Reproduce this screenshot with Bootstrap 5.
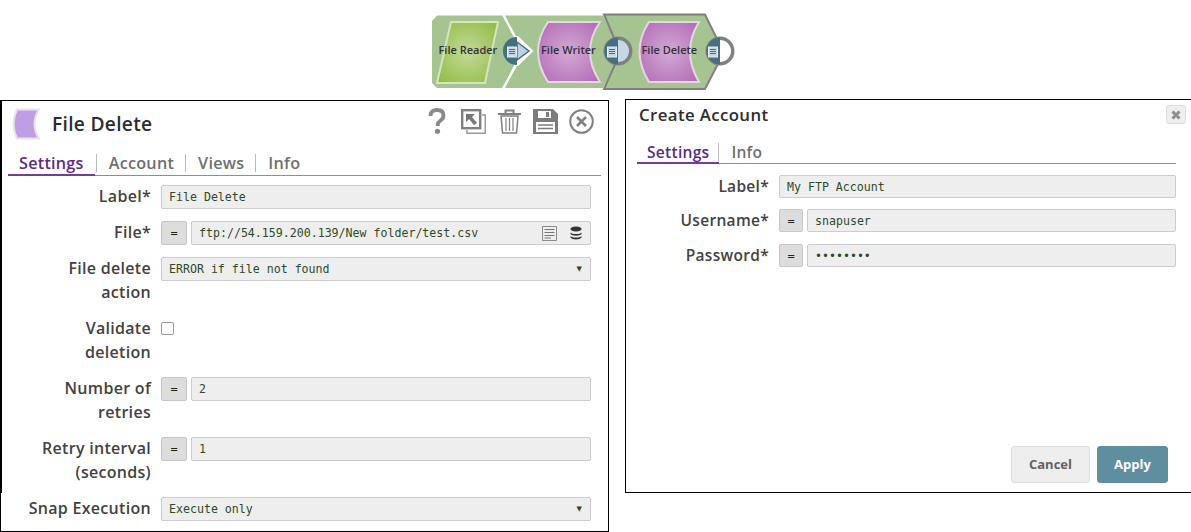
<!DOCTYPE html>
<html lang="en">
<head>
<meta charset="utf-8">
<title>File Delete</title>
<link href="https://cdn.jsdelivr.net/npm/bootstrap@5.3.0/dist/css/bootstrap.min.css" rel="stylesheet">
<style>
body{font-family:"Open Sans",sans-serif;background:#fff;width:1191px;height:532px;overflow:hidden;color:#3b3b3b}
.pipeline{height:98px}
.pipeline svg{display:block}
.pipeline text{font-family:"Open Sans",sans-serif;font-size:11px;font-weight:600;fill:#33313b}
.snap-panel{background:#fff;border:1px solid #000;flex:none;position:relative}
.panel-left{width:609px;height:432px;margin-top:2px;padding:0 17px 0 1px}
.panel-left::before{content:"";position:absolute;left:-1px;top:-1px;width:2px;height:393px;background:#000}
.panel-right{width:566px;height:394px;margin-top:1px;margin-left:16px;border-right-width:0;padding:0 15px 0 11px}
.head-left{height:53px;padding:7px 0 0 10px}
.snap-title{font-size:19.2px;font-weight:600;color:#2d2d2d;margin:0 0 0 11px;letter-spacing:.3px;line-height:32px}
.tool-icons{margin-left:auto;margin-right:-3px;gap:11px}
.tabs-strip{border-bottom:1px solid #8f8f8f;height:22px;margin-left:6px;margin-right:-10px;flex-wrap:nowrap}
.panel-right .tabs-strip{margin:0;height:21px}
.tab-item{font-size:16.2px;font-weight:600;color:#6f6f6f;line-height:18px;padding:0 12px;position:relative;letter-spacing:.25px}
.tab-item+.tab-item::before{content:"";position:absolute;left:-1px;top:0;height:18px;width:1px;background:#bbb}
.tab-item.active-tab{color:#5b2a86;height:22px;border-bottom:2px solid #7a37a4;padding:0 11px}
.panel-left .tab-item.active-tab{margin-right:2px}
.panel-right .tab-item.active-tab{height:21px;padding:0 10px}
.panel-right .tab-item{line-height:19px;font-size:15.6px}
.form-area{padding-top:9px}
.field-row{display:flex;gap:10px;margin-bottom:12px}
.field-label{width:149px;padding-left:18px;flex:none;text-align:right;font-size:16px;font-weight:600;line-height:24px;color:#424242;letter-spacing:.3px;position:relative;top:-1px}
.field-body{flex:1;display:flex;gap:4px;min-width:0;align-items:flex-start}
.fake-input{flex:1;min-width:0;height:24px;background:#eee;border:1px solid #ccc;border-radius:2px;font-family:"DejaVu Sans Mono",monospace;font-size:11.6px;line-height:22px;padding:0 8px 0 7px;color:#2f4a2a;display:flex;align-items:center;white-space:pre}
.eq-btn{width:26px;height:24px;flex:none;padding:0;background:#ddd;border:1px solid #c6c6c6;border-radius:2px;font-family:"DejaVu Sans Mono",monospace;font-size:12px;line-height:20px;color:#222}
.caret-down{margin-left:auto;font-size:7px;color:#2f4a2a;font-family:"DejaVu Sans",sans-serif}
.tick-box{width:13px;height:13px;margin-top:5px;border:1px solid #9b9b9b;border-radius:2px;background:#fff;flex:none}
.form-right{padding-top:11px}
.form-right .field-row{gap:10px;margin-bottom:11px}
.form-right .field-row:nth-child(2){margin-bottom:12px}
.form-right .field-label{width:132px;padding-left:0;line-height:23px;top:0;font-size:15.5px}
.form-right .fake-input,.form-right .eq-btn{height:23px}
.form-right .eq-btn{width:24px}
.head-right{height:43px;padding:3px 0 0 2px}
.acct-title{font-size:16.8px;font-weight:600;color:#2d2d2d;margin:0;line-height:24px;letter-spacing:.4px}
.x-btn{position:absolute;right:5px;top:5px;width:20px;height:19px;padding:0;background:#eee;border:1px solid #ddd;border-radius:3px;line-height:14px;display:flex;align-items:center;justify-content:center}
.foot-btns{position:absolute;right:23px;bottom:9px;gap:7px}
.btn-cancel,.btn-apply{height:37px;font-size:13px;font-weight:700;padding:0;border-radius:3px}
.btn-cancel{width:79px;background:#eee;border:1px solid #ddd;color:#66615c}
.btn-apply{width:71px;background:#5f8f9f;border:1px solid #5f8f9f;color:#fff}
</style>
</head>
<body>
<div class="pipeline">
<svg width="1191" height="98" viewBox="0 0 1191 98" xmlns="http://www.w3.org/2000/svg">
<defs>
<radialGradient id="gGreen" cx=".5" cy=".5" r=".65"><stop offset="0" stop-color="#c3d99a"/><stop offset="1" stop-color="#93bd45"/></radialGradient>
<radialGradient id="gPurple" cx=".5" cy=".5" r=".65"><stop offset="0" stop-color="#d3aad6"/><stop offset="1" stop-color="#b36db6"/></radialGradient>
</defs>
<path d="M437 15.500H503L517 44V59L503 88H437L432 83V21Z" fill="#a5c491"/>
<path d="M505 15.500H603L617 45V60L603 88H505L519 60V44Z" fill="#a5c491"/>
<path d="M503 15L516 38M516 66L503 88" stroke="#fff" stroke-width="2" fill="none"/>
<path d="M604 14.500H705L720 45V60L705 89H604L617 60V45Z" fill="#a5c491" stroke="#808080" stroke-width="2"/>
<path d="M451 22H498L485 83H437Z" fill="url(#gGreen)" stroke="#d6e5c0" stroke-width="2"/>
<path d="M548 22H600Q580 51 600 82H548Q528 51 548 22Z" fill="url(#gPurple)" stroke="#e3d8e2" stroke-width="2"/>
<path d="M649 22H699Q681 51 699 82H649Q630 51 649 22Z" fill="url(#gPurple)" stroke="#e3d8e2" stroke-width="2"/>
<text x="438.500" y="54">File Reader</text>
<text x="541" y="54">File Writer</text>
<text x="641.500" y="54">File Delete</text>
<path d="M514 36H518L533.500 51L518 66H514Z" fill="#fff"/>
<path d="M517 37A14 14 0 0 0 517 65Z" fill="#44707f"/>
<path d="M517 42L529 51L517 60Z" fill="#bcd2e2" stroke="#44707f" stroke-width="1.500"/>
<circle cx="618" cy="51" r="14.500" fill="#808080"/>
<path d="M618 40A11 11 0 0 1 618 62Z" fill="#c5d8e6"/>
<path d="M618 37.500A13.500 13.500 0 0 0 618 64.500Z" fill="#44707f"/>
<circle cx="720" cy="51" r="14.500" fill="#808080"/>
<path d="M720 40A11 11 0 0 1 720 62Z" fill="#fff"/>
<path d="M720 37.500A13.500 13.500 0 0 0 720 64.500Z" fill="#44707f"/>
<g fill="#c5d8e4" stroke="#e4eef2">
<rect x="507.500" y="47" width="9" height="10"/>
<rect x="607.500" y="47" width="9" height="10"/>
<rect x="708.500" y="47" width="9" height="10"/>
</g>
<path d="M509 49.500h6M509 51.500h6M509 53.500h6M609 49.500h6M609 51.500h6M609 53.500h6M710 49.500h6M710 51.500h6M710 53.500h6" stroke="#44707f" fill="none"/>
</svg>
</div>
<div class="d-flex align-items-start">
<section class="snap-panel panel-left">
<div class="head-left d-flex align-items-start">
<svg width="29" height="32" viewBox="0 0 29 32" class="flex-none"><path d="M5 1.500H27Q18 16 27 30.500H5Q-2 16 5 1.500Z" fill="#c09ee6" stroke="#e6e6e6" stroke-width="2"/></svg>
<h1 class="snap-title">File Delete</h1>
<div class="tool-icons d-flex align-items-center">
<svg width="18" height="26" viewBox="0 0 18 26" class="me-1"><path d="M2.500 8Q2.500 2 9 2Q15.500 2 15.500 7.500Q15.500 10.500 12.500 12.500Q9.500 14.500 9.500 18" fill="none" stroke="#8a8a8a" stroke-width="3.800"/><circle cx="9.500" cy="23.300" r="2.600" fill="#8a8a8a"/></svg>
<svg width="25" height="25" viewBox="0 0 25 25"><rect x="1.200" y="1.200" width="18" height="18" fill="none" stroke="#808080" stroke-width="2.400"/><path d="M21 6H24.300V24.300H6V21" fill="none" stroke="#9a9a9a" stroke-width="1.500"/><path d="M5 5H14L11 8L16 14L13 16L8 10L5 13Z" fill="#777"/></svg>
<svg width="25" height="25" viewBox="0 0 25 25"><path d="M1 5H24M8.500 5V1.500H16.500V5" fill="none" stroke="#808080" stroke-width="2"/><path d="M4 7L5.500 24H19.500L21 7Z" fill="none" stroke="#808080" stroke-width="1.500"/><path d="M9 9V22M12.500 9V22M16 9V22" stroke="#808080" stroke-width="1.200"/></svg>
<svg width="25" height="25" viewBox="0 0 25 25"><path d="M0 0H20L25 5V25H0Z" fill="#7c7c7c"/><rect x="5" y="2" width="13" height="7" fill="#fff"/><rect x="13" y="3" width="3" height="5" fill="#7c7c7c"/><rect x="3" y="13" width="19" height="10" fill="#fff"/><path d="M5 16H20M5 19.500H20" stroke="#7c7c7c" stroke-width="1.500"/></svg>
<svg width="25" height="25" viewBox="0 0 25 25"><circle cx="12.500" cy="12.500" r="11.300" fill="none" stroke="#808080" stroke-width="2"/><path d="M8 8L17 17M17 8L8 17" stroke="#808080" stroke-width="2.600"/></svg>
</div>
</div>
<nav class="tabs-strip d-flex">
<div class="tab-item active-tab">Settings</div>
<div class="tab-item">Account</div>
<div class="tab-item">Views</div>
<div class="tab-item">Info</div>
</nav>
<form class="form-area">
<div class="field-row"><label class="field-label">Label*</label><div class="field-body"><div class="fake-input">File Delete</div></div></div>
<div class="field-row"><label class="field-label">File*</label><div class="field-body"><button type="button" class="btn eq-btn">=</button><div class="fake-input">ftp://54.159.200.139/New folder/test.csv<svg class="ms-auto me-1" width="17" height="17" viewBox="0 0 17 17"><path d="M1.500 1.500H15.500V15.500H1.500Z" fill="none" stroke="#8a8a8a"/><path d="M3.500 4.500H13.500M3.500 7.500H13.500M3.500 10.500H13.500M3.500 13H10" stroke="#777"/></svg><svg class="ms-2" width="12" height="14" viewBox="0 0 12 14"><ellipse cx="6" cy="3" rx="5.500" ry="2.500" fill="#333"/><path d="M.5 6.500C2 8.500 10 8.500 11.500 6.500V8C10 10.300 2 10.300 .5 8ZM.5 10C2 12 10 12 11.500 10V11.500C10 14 2 14 .5 11.500Z" fill="#333"/></svg></div></div></div>
<div class="field-row"><label class="field-label">File delete action</label><div class="field-body"><div class="fake-input">ERROR if file not found<span class="caret-down">▼</span></div></div></div>
<div class="field-row"><label class="field-label">Validate deletion</label><div class="field-body"><span class="tick-box"></span></div></div>
<div class="field-row"><label class="field-label">Number of retries</label><div class="field-body"><button type="button" class="btn eq-btn">=</button><div class="fake-input">2</div></div></div>
<div class="field-row"><label class="field-label">Retry interval (seconds)</label><div class="field-body"><button type="button" class="btn eq-btn">=</button><div class="fake-input">1</div></div></div>
<div class="field-row"><label class="field-label">Snap Execution</label><div class="field-body"><div class="fake-input">Execute only<span class="caret-down">▼</span></div></div></div>
</form>
</section>
<section class="snap-panel panel-right">
<div class="head-right"><h2 class="acct-title">Create Account</h2></div>
<button type="button" class="btn x-btn" aria-label="Close"><svg width="10" height="10" viewBox="0 0 10 10"><path d="M1.500 1.500L8.500 8.500M8.500 1.500L1.500 8.500" stroke="#8c8c8c" stroke-width="3"/></svg></button>
<nav class="tabs-strip d-flex">
<div class="tab-item active-tab">Settings</div>
<div class="tab-item">Info</div>
</nav>
<form class="form-right">
<div class="field-row"><label class="field-label">Label*</label><div class="field-body"><div class="fake-input">My FTP Account</div></div></div>
<div class="field-row"><label class="field-label">Username*</label><div class="field-body"><button type="button" class="btn eq-btn">=</button><div class="fake-input">snapuser</div></div></div>
<div class="field-row"><label class="field-label">Password*</label><div class="field-body"><button type="button" class="btn eq-btn">=</button><div class="fake-input">••••••••</div></div></div>
</form>
<div class="foot-btns d-flex"><button type="button" class="btn btn-cancel">Cancel</button><button type="button" class="btn btn-apply">Apply</button></div>
</section>
</div>
<script src="https://cdn.jsdelivr.net/npm/bootstrap@5.3.0/dist/js/bootstrap.bundle.min.js"></script>
</body>
</html>
